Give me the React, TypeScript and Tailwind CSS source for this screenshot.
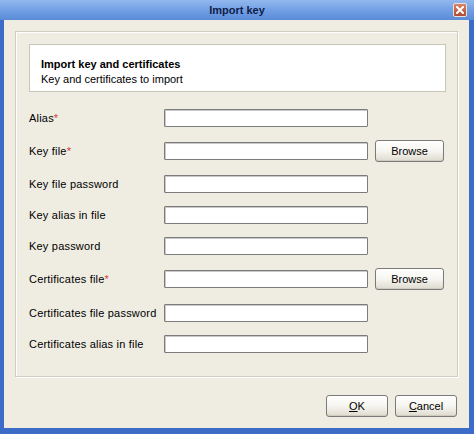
import React from 'react'

type Field = { label: string; required?: boolean; browse?: boolean; mt: string }

const fields: Field[] = [
  { label: 'Alias', required: true, mt: 'mt-[17px]' },
  { label: 'Key file', required: true, browse: true, mt: 'mt-[15px]' },
  { label: 'Key file password', mt: 'mt-[15px]' },
  { label: 'Key alias in file', mt: 'mt-[13px]' },
  { label: 'Key password', mt: 'mt-[13px]' },
  { label: 'Certificates file', required: true, browse: true, mt: 'mt-[15px]' },
  { label: 'Certificates file password', mt: 'mt-[16px]' },
  { label: 'Certificates alias in file', mt: 'mt-[13px]' },
]

function XpButton({ children, className }: { children: React.ReactNode; className?: string }) {
  return (
    <button
      className={
        'h-[22px] rounded-[3px] border border-[#7a7a7a] bg-gradient-to-b from-white via-[#f6f5f0] to-[#dedbcf] text-[11px] text-black shadow-[inset_0_-1px_0_#cfccbf] flex items-center justify-center ' +
        (className ?? '')
      }
    >
      {children}
    </button>
  )
}

export default function App() {
  return (
    <div
      className="w-[474px] h-[434px] flex flex-col bg-[#3a6cc8] select-none"
      style={{ fontFamily: '"Liberation Sans", Arial, sans-serif' }}
    >
      {/* Title bar */}
      <div className="relative h-[20px] shrink-0 flex items-center justify-center bg-gradient-to-b from-[#93b8ee] via-[#72a0e4] to-[#5b8bd8]">
        <span className="text-[11px] font-bold text-[#10204a]">Import key</span>
        <div className="absolute right-[7px] top-[3px] w-[14px] h-[14px] rounded-[2px] border border-[#e8e0dc] bg-gradient-to-b from-[#d9826a] to-[#b04a32] flex items-center justify-center">
          <svg width="8" height="8" viewBox="0 0 8 8">
            <path d="M1 1 L7 7 M7 1 L1 7" stroke="white" strokeWidth="2" strokeLinecap="square" />
          </svg>
        </div>
      </div>

      {/* Body */}
      <div className="flex-1 ml-[4px] mr-[5px] mb-[6px] bg-[#efede2] pt-[11px] pl-[11px] flex flex-col">
        <div className="w-[443px] h-[346px] border border-[#cfccc0] shadow-[inset_1px_1px_0_#ffffff,1px_1px_0_#ffffff] pl-[13px] pt-[12px] flex flex-col">
          <div className="w-[417px] h-[48px] bg-white border border-[#c8c5b9] pl-[11px] pt-[7px] flex flex-col justify-center text-[11px] text-black leading-[15px]">
            <span className="font-bold">Import key and certificates</span>
            <span>Key and certificates to import</span>
          </div>

          {fields.map((f) => (
            <div key={f.label} className={'flex items-center h-[18px] ' + f.mt}>
              <div className="w-[135px] text-[11px] text-black tracking-[0.2px] whitespace-nowrap">
                {f.label}
                {f.required && <span className="text-[#d23c3c]">*</span>}
              </div>
              <div className="w-[204px] h-[18px] bg-white border border-[#7c7c7c] rounded-[1px] shadow-[inset_1px_1px_0_#c9c9c9]" />
              {f.browse && <XpButton className="ml-[7px] w-[69px]">Browse</XpButton>}
            </div>
          ))}
        </div>

        <div className="flex justify-end gap-[7px] mt-[18px] pr-[12px]">
          <XpButton className="w-[62px]">
            <span className="underline underline-offset-1">O</span>K
          </XpButton>
          <XpButton className="w-[62px]">
            <span className="underline underline-offset-1">C</span>ancel
          </XpButton>
        </div>
      </div>
    </div>
  )
}
